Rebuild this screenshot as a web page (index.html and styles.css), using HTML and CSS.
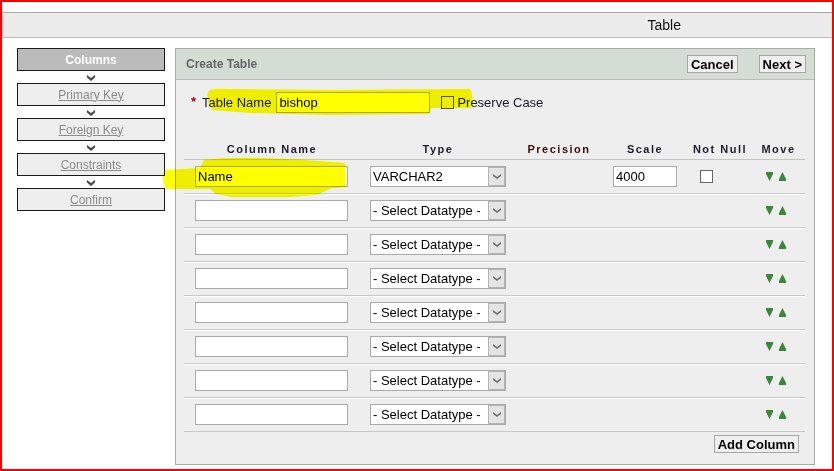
FILE: index.html
```html
<!DOCTYPE html>
<html>
<head>
<meta charset="utf-8">
<title>Create Table</title>
<link rel="stylesheet" href="styles.css">
</head>
<body>
<div class="frame">
  <div class="titlebar"><span class="title">Table</span></div>
  <div class="main">
    <nav class="wizard">
      <div class="step current">Columns</div>
      <div class="chev"><svg width="8" height="6" viewBox="0 0 8 6"><path d="M0 0 L4 3 L8 0 L8 2.6 L4 6 L0 2.6 Z"/></svg></div>
      <div class="step"><a href="#">Primary Key</a></div>
      <div class="chev"><svg width="8" height="6" viewBox="0 0 8 6"><path d="M0 0 L4 3 L8 0 L8 2.6 L4 6 L0 2.6 Z"/></svg></div>
      <div class="step"><a href="#">Foreign Key</a></div>
      <div class="chev"><svg width="8" height="6" viewBox="0 0 8 6"><path d="M0 0 L4 3 L8 0 L8 2.6 L4 6 L0 2.6 Z"/></svg></div>
      <div class="step"><a href="#">Constraints</a></div>
      <div class="chev"><svg width="8" height="6" viewBox="0 0 8 6"><path d="M0 0 L4 3 L8 0 L8 2.6 L4 6 L0 2.6 Z"/></svg></div>
      <div class="step"><a href="#">Confirm</a></div>
    </nav>
    <section class="panel">
      <div class="panel-head">
        <span class="panel-title">Create Table</span>
        <div class="actions">
          <button class="btn">Cancel</button>
          <button class="btn">Next &gt;</button>
        </div>
      </div>
      <div class="panel-body">
        <div class="name-row">
          <span class="req">*</span>
          <label class="lbl">Table Name</label>
          <input class="txt tname" value="bishop">
          <input type="checkbox" class="cb pc">
          <span class="lbl">Preserve Case</span>
        </div>
        <div class="grid">
          <div class="hdr">
            <span>Column Name</span>
            <span>Type</span>
            <span class="prec">Precision</span>
            <span>Scale</span>
            <span>Not Null</span>
            <span>Move</span>
          </div>
          <div class="row">
            <div class="c1"><input class="txt cname" value="Name"></div>
            <div class="c2"><div class="sel"><select><option>VARCHAR2</option></select><span class="drop"><svg width="8" height="5" viewBox="0 0 8 5"><path d="M0 0 L4 3 L8 0 L8 2 L4 5 L0 2 Z"/></svg></span></div></div>
            <div class="c3"></div>
            <div class="c4"><input class="txt scale" value="4000"></div>
            <div class="c5"><input type="checkbox" class="cb nn"></div>
            <div class="c6"><svg class="mv" width="20" height="9" viewBox="0 0 20 9"><path d="M0 0 H7 V2 L3.5 9 L0 2 Z"/><path d="M16.5 0 L20 7 V9 H13 V7 Z"/></svg></div>
          </div>
          <div class="row">
            <div class="c1"><input class="txt cname" value=""></div>
            <div class="c2"><div class="sel"><select><option>- Select Datatype -</option></select><span class="drop"><svg width="8" height="5" viewBox="0 0 8 5"><path d="M0 0 L4 3 L8 0 L8 2 L4 5 L0 2 Z"/></svg></span></div></div>
            <div class="c3"></div><div class="c4"></div><div class="c5"></div>
            <div class="c6"><svg class="mv" width="20" height="9" viewBox="0 0 20 9"><path d="M0 0 H7 V2 L3.5 9 L0 2 Z"/><path d="M16.5 0 L20 7 V9 H13 V7 Z"/></svg></div>
          </div>
          <div class="row">
            <div class="c1"><input class="txt cname" value=""></div>
            <div class="c2"><div class="sel"><select><option>- Select Datatype -</option></select><span class="drop"><svg width="8" height="5" viewBox="0 0 8 5"><path d="M0 0 L4 3 L8 0 L8 2 L4 5 L0 2 Z"/></svg></span></div></div>
            <div class="c3"></div><div class="c4"></div><div class="c5"></div>
            <div class="c6"><svg class="mv" width="20" height="9" viewBox="0 0 20 9"><path d="M0 0 H7 V2 L3.5 9 L0 2 Z"/><path d="M16.5 0 L20 7 V9 H13 V7 Z"/></svg></div>
          </div>
          <div class="row">
            <div class="c1"><input class="txt cname" value=""></div>
            <div class="c2"><div class="sel"><select><option>- Select Datatype -</option></select><span class="drop"><svg width="8" height="5" viewBox="0 0 8 5"><path d="M0 0 L4 3 L8 0 L8 2 L4 5 L0 2 Z"/></svg></span></div></div>
            <div class="c3"></div><div class="c4"></div><div class="c5"></div>
            <div class="c6"><svg class="mv" width="20" height="9" viewBox="0 0 20 9"><path d="M0 0 H7 V2 L3.5 9 L0 2 Z"/><path d="M16.5 0 L20 7 V9 H13 V7 Z"/></svg></div>
          </div>
          <div class="row">
            <div class="c1"><input class="txt cname" value=""></div>
            <div class="c2"><div class="sel"><select><option>- Select Datatype -</option></select><span class="drop"><svg width="8" height="5" viewBox="0 0 8 5"><path d="M0 0 L4 3 L8 0 L8 2 L4 5 L0 2 Z"/></svg></span></div></div>
            <div class="c3"></div><div class="c4"></div><div class="c5"></div>
            <div class="c6"><svg class="mv" width="20" height="9" viewBox="0 0 20 9"><path d="M0 0 H7 V2 L3.5 9 L0 2 Z"/><path d="M16.5 0 L20 7 V9 H13 V7 Z"/></svg></div>
          </div>
          <div class="row">
            <div class="c1"><input class="txt cname" value=""></div>
            <div class="c2"><div class="sel"><select><option>- Select Datatype -</option></select><span class="drop"><svg width="8" height="5" viewBox="0 0 8 5"><path d="M0 0 L4 3 L8 0 L8 2 L4 5 L0 2 Z"/></svg></span></div></div>
            <div class="c3"></div><div class="c4"></div><div class="c5"></div>
            <div class="c6"><svg class="mv" width="20" height="9" viewBox="0 0 20 9"><path d="M0 0 H7 V2 L3.5 9 L0 2 Z"/><path d="M16.5 0 L20 7 V9 H13 V7 Z"/></svg></div>
          </div>
          <div class="row">
            <div class="c1"><input class="txt cname" value=""></div>
            <div class="c2"><div class="sel"><select><option>- Select Datatype -</option></select><span class="drop"><svg width="8" height="5" viewBox="0 0 8 5"><path d="M0 0 L4 3 L8 0 L8 2 L4 5 L0 2 Z"/></svg></span></div></div>
            <div class="c3"></div><div class="c4"></div><div class="c5"></div>
            <div class="c6"><svg class="mv" width="20" height="9" viewBox="0 0 20 9"><path d="M0 0 H7 V2 L3.5 9 L0 2 Z"/><path d="M16.5 0 L20 7 V9 H13 V7 Z"/></svg></div>
          </div>
          <div class="row last">
            <div class="c1"><input class="txt cname" value=""></div>
            <div class="c2"><div class="sel"><select><option>- Select Datatype -</option></select><span class="drop"><svg width="8" height="5" viewBox="0 0 8 5"><path d="M0 0 L4 3 L8 0 L8 2 L4 5 L0 2 Z"/></svg></span></div></div>
            <div class="c3"></div><div class="c4"></div><div class="c5"></div>
            <div class="c6"><svg class="mv" width="20" height="9" viewBox="0 0 20 9"><path d="M0 0 H7 V2 L3.5 9 L0 2 Z"/><path d="M16.5 0 L20 7 V9 H13 V7 Z"/></svg></div>
          </div>
        </div>
        <div class="foot"><button class="btn">Add Column</button></div>
      </div>
    </section>
  </div>
  <svg class="marker" width="834" height="471" viewBox="0 0 834 471">
    <path d="M208 92 Q209 88 228 89 L330 90 L470 89 Q474 96 471 108 L431 108 L429 114 L330 115 L250 113 L212 110 Q206 101 208 92 Z"/>
    <path d="M164 170 L200 168 L204 160 Q230 157 262 158 L305 160 L345 163 L346 187 L332 188 L316 195 L290 197 L232 197 L216 194 L210 189 L166 189 Q161 180 164 170 Z"/>
  </svg>
</div>
</body>
</html>
```

FILE: styles.css
```css
* { box-sizing: border-box; }
html, body { margin: 0; padding: 0; background: #fff; }
body {
  font-family: "Liberation Sans", Arial, sans-serif;
  font-size: 13px;
  color: #111;
}
.frame {
  position: relative;
  width: 834px;
  height: 471px;
  border: 2px solid #ff0000;
  overflow: hidden;
  background: #fff;
}
.titlebar {
  margin-top: 10px;
  height: 26px;
  background: #ececec;
  border-top: 1px solid #aaa;
  border-bottom: 1px solid #bbb;
  border-left: 1px solid #ccc;
  display: flex;
  justify-content: flex-end;
  align-items: center;
  padding-right: 151px;
}
.title { font-size: 14px; color: #111; }
.main {
  display: flex;
  align-items: flex-start;
  margin-top: 10px;
  padding-left: 15px;
}
.wizard {
  width: 148px;
  margin-right: 10px;
  display: flex;
  flex-direction: column;
}
.step {
  height: 23px;
  border: 1px solid #1a1a1a;
  background: #eeeeee;
  display: flex;
  align-items: center;
  justify-content: center;
  font-size: 12px;
}
.step a { color: #8a8a8a; text-decoration: underline; }
.step.current {
  background: #bbbbbb;
  color: #fff;
  font-weight: bold;
}
.chev {
  height: 12px;
  display: flex;
  justify-content: center;
  align-items: center;
  padding-top: 1px;
}
.chev svg { display: block; fill: #4a4a4a; }
.panel {
  width: 640px;
  border: 1px solid #aaa;
  background: #eeeeee;
}
.panel-head {
  height: 31px;
  background: #d3ddd3;
  border-bottom: 1px solid #b5bdb5;
  display: flex;
  align-items: center;
  justify-content: space-between;
  padding: 0 8px 0 10px;
}
.panel-title { font-size: 12px; font-weight: bold; color: #666; }
.actions { display: flex; gap: 21px; }
.btn {
  font-family: "Liberation Sans", Arial, sans-serif;
  font-size: 13px;
  font-weight: bold;
  color: #000;
  background: #efefef;
  border: 1px solid #a6a6a6;
  height: 18px;
  padding: 0 3px;
  margin: 0;
  line-height: 15px;
}
.panel-body { padding: 12px 9px 11px 8px; }
.name-row {
  display: flex;
  align-items: center;
  height: 21px;
  margin-left: 7px;
}
.req {
  color: #b00000;
  font-weight: bold;
  font-size: 13px;
  width: 11px;
  align-self: flex-start;
  margin-top: 2px;
}
.lbl { font-size: 13px; color: #1a1a2a; }
.txt {
  font-family: "Liberation Sans", Arial, sans-serif;
  font-size: 13px;
  color: #000;
  height: 21px;
  border: 1px solid #aaa;
  background: #fff;
  padding: 0 2px;
  margin: 0;
  outline: none;
}
.tname { width: 154px; margin-left: 5px; }
.cb {
  appearance: none;
  -webkit-appearance: none;
  margin: 0;
  width: 13px;
  height: 13px;
  border: 1px solid #666;
  background: #fff;
}
.cb.pc { margin-left: 11px; margin-right: 3px; background: transparent; border-color: #555; }
.grid { margin-top: 26px; }
.hdr, .row {
  display: grid;
  grid-template-columns: 176px 156px 86px 86px 64px 53px;
  align-items: center;
}
.hdr {
  height: 21px;
  border-bottom: 1px solid #c4c4c4;
}
.hdr span {
  text-align: center;
  font-size: 11px;
  font-weight: bold;
  letter-spacing: 1.5px;
  color: #1c1c2a;
}
.hdr span.prec { color: #3a0c0c; }
.row {
  height: 34px;
  border-bottom: 1px solid #c8c8c8;
  box-shadow: 0 1px 0 #fff;
}
.row.last { box-shadow: none; }
.c1, .c2, .c4, .c5, .c6 { display: flex; align-items: center; }
.cname { width: 153px; margin-left: 11px; }
.c2 { padding-left: 10px; }
.sel { position: relative; width: 136px; height: 21px; }
.sel select {
  appearance: none;
  -webkit-appearance: none;
  width: 136px;
  height: 21px;
  border: 1px solid #aaa;
  background: #fff;
  font-family: "Liberation Sans", Arial, sans-serif;
  font-size: 13px;
  color: #000;
  padding: 0 0 0 2px;
  margin: 0;
  outline: none;
}
.drop {
  position: absolute;
  right: 1px;
  top: 1px;
  bottom: 1px;
  width: 17px;
  background: #e4e4e4;
  border: 1px solid #b3b3b3;
  display: flex;
  align-items: center;
  justify-content: center;
}
.drop svg { display: block; fill: #707070; }
.scale { width: 64px; margin-left: 11px; }
.c5 { padding-left: 12px; }
.c6 { padding-left: 14px; }
.mv { display: block; fill: #3a873a; }
.foot {
  display: flex;
  justify-content: flex-end;
  margin-top: 3px;
  padding-right: 6px;
}
.marker {
  position: absolute;
  top: -2px;
  left: -2px;
  pointer-events: none;
  mix-blend-mode: multiply;
}
.marker path { fill: #ffff00; }
```
